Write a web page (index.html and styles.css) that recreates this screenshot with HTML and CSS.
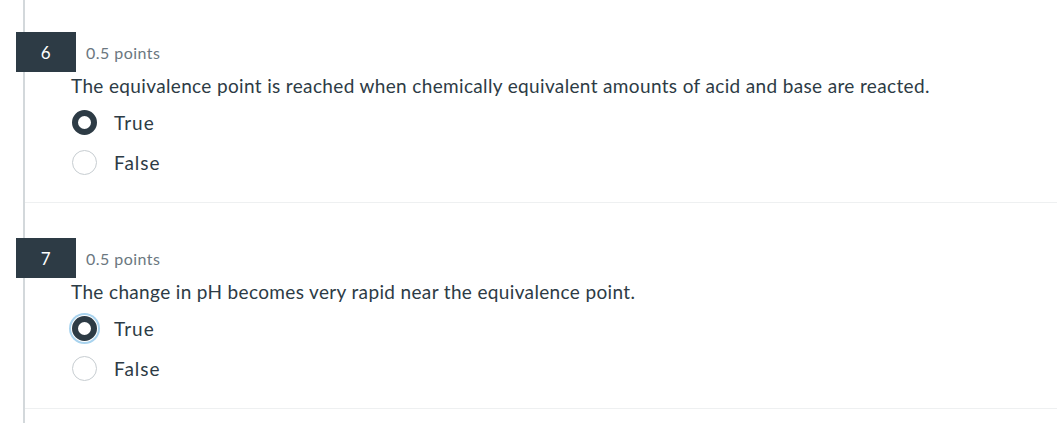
FILE: index.html
```html
<!DOCTYPE html>
<html>
<head>
<meta charset="utf-8">
<link rel="stylesheet" href="styles.css">
</head>
<body>
<div class="page">
  <div class="question">
    <div class="header">
      <div class="badge">6</div>
      <div class="points">0.5 points</div>
    </div>
    <div class="text">The equivalence point is reached when chemically equivalent amounts of acid and base are reacted.</div>
    <div class="answers">
      <div class="answer"><span class="radio checked"></span><span class="label">True</span></div>
      <div class="answer"><span class="radio"></span><span class="label">False</span></div>
    </div>
  </div>
  <div class="question">
    <div class="header">
      <div class="badge">7</div>
      <div class="points">0.5 points</div>
    </div>
    <div class="text">The change in pH becomes very rapid near the equivalence point.</div>
    <div class="answers">
      <div class="answer"><span class="radio checked focus"></span><span class="label">True</span></div>
      <div class="answer"><span class="radio"></span><span class="label">False</span></div>
    </div>
  </div>
</div>
</body>
</html>
```
FILE: styles.css
```css
html, body {
  margin: 0;
  padding: 0;
  background: #fff;
  font-family: Lato, "Open Sans", sans-serif;
  color: #2d3b45;
}
.page {
  margin-left: 23px;
  border-left: 2px solid #d3d8db;
  min-height: 423px;
  padding-top: 32px;
  box-sizing: border-box;
}
.question {
  border-bottom: 1px solid #eef0f1;
  margin-bottom: 35px;
}
.header {
  display: flex;
  align-items: center;
  margin-left: -9px;
  height: 40px;
}
.badge {
  width: 60px;
  height: 40px;
  background: #2d3b45;
  color: #fff;
  font-size: 17px;
  letter-spacing: 0.5px;
  display: flex;
  align-items: center;
  justify-content: center;
}
.points {
  margin-left: 10px;
  font-size: 16px;
  letter-spacing: 0.45px;
  color: #6b7780;
}
.text {
  margin-left: 46px;
  margin-top: 2px;
  font-size: 19px;
  letter-spacing: 0.35px;
  line-height: 24px;
}
.answers {
  margin-top: 4px;
  padding-bottom: 20px;
}
.answer {
  display: flex;
  align-items: center;
  height: 40px;
}
.radio {
  box-sizing: border-box;
  width: 25px;
  height: 25px;
  border-radius: 50%;
  border: 1px solid #c7cdd1;
  margin-left: 47px;
  background: #fff;
}
.radio.checked {
  border: 6px solid #2d3b45;
}
.radio.focus {
  box-shadow: 0 0 0 1px #fff, 0 0 0 3px #a9d3ee;
}
.label {
  margin-left: 17px;
  font-size: 19px;
  letter-spacing: 1px;
}
```
